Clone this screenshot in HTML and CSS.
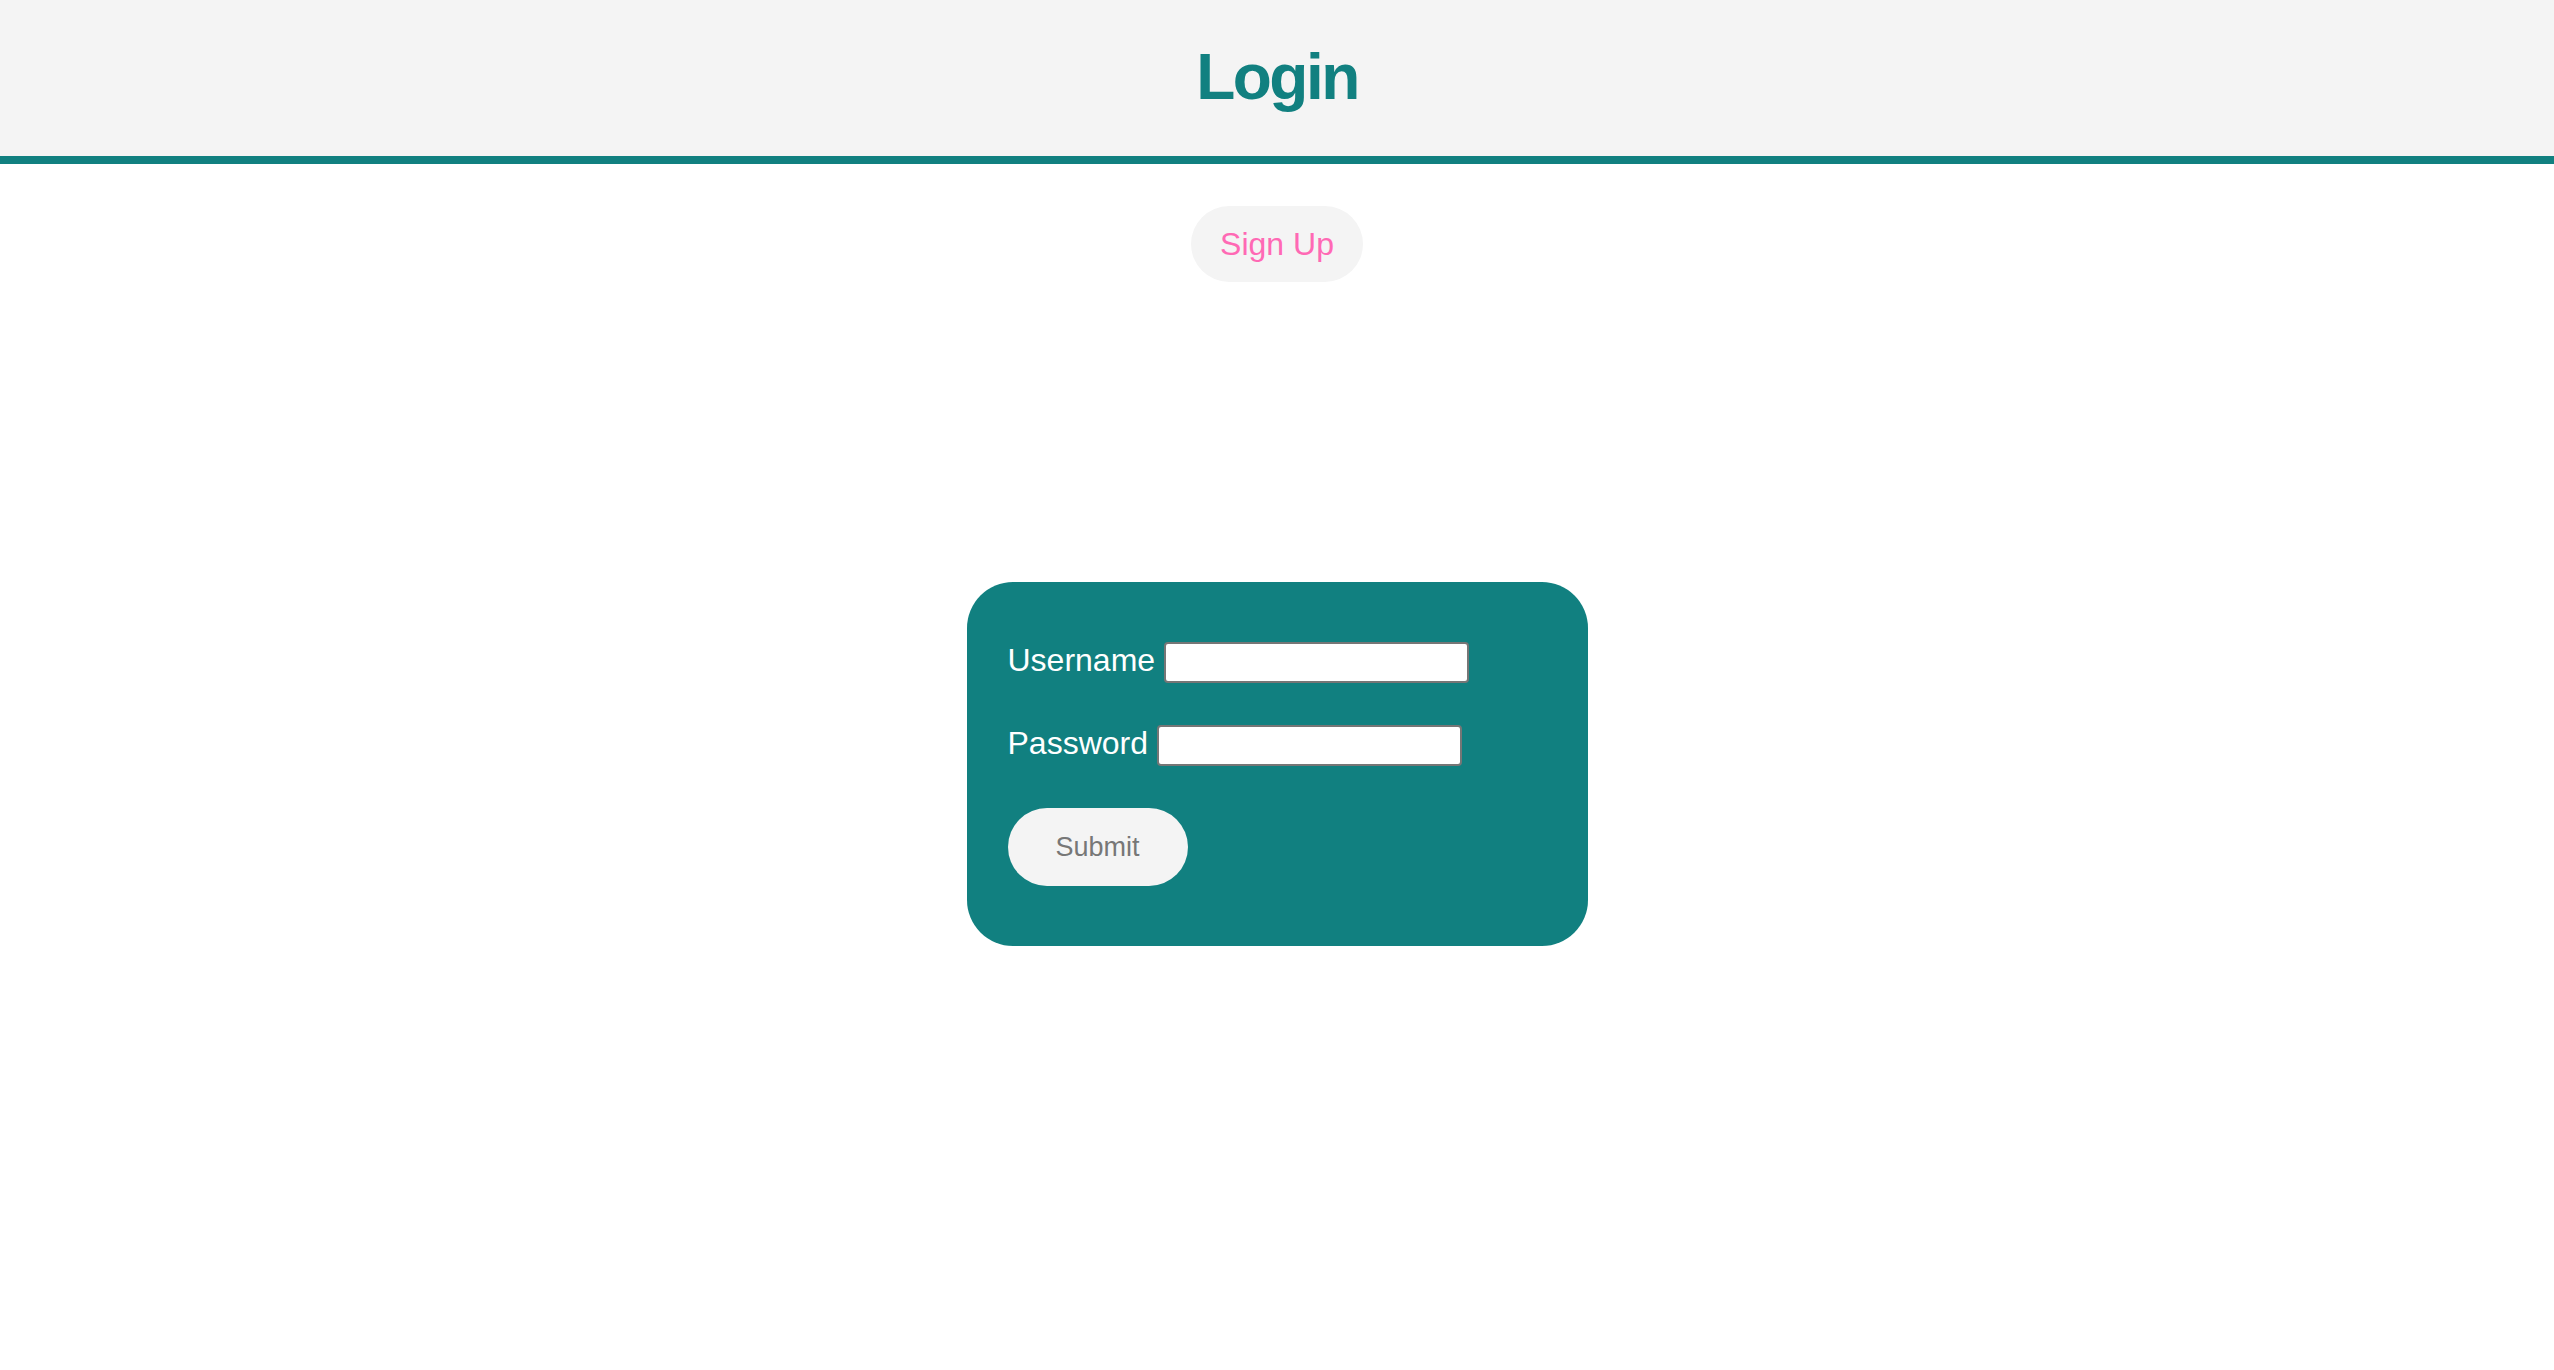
FILE: index.html
```html
<!DOCTYPE html>
<html lang="en">
<head>
<meta charset="utf-8">
<title>Login</title>
<link rel="stylesheet" href="styles.css">
</head>
<body>
<header class="site-header">
  <h1 class="title">Login</h1>
</header>
<nav class="nav">
  <a class="signup" href="#">Sign Up</a>
</nav>
<main class="main">
  <form class="card">
    <div class="row">
      <label class="label" for="u">Username</label>
      <input class="field" id="u" type="text">
    </div>
    <div class="row">
      <label class="label" for="p">Password</label>
      <input class="field" id="p" type="password">
    </div>
    <button class="submit" type="button">Submit</button>
  </form>
</main>
</body>
</html>
```
FILE: styles.css
```css
* { box-sizing: border-box; }
html, body { margin: 0; padding: 0; background: #ffffff; }
body { font-family: "Liberation Sans", Arial, Helvetica, sans-serif; }

.site-header {
  height: 164px;
  background: #f4f4f4;
  border-bottom: 8px solid #118080;
  display: flex;
  align-items: center;
  justify-content: center;
}
.title {
  margin: 0;
  font-size: 64px;
  font-weight: 700;
  color: #118080;
  letter-spacing: -2.5px;
  line-height: 74px;
  padding-bottom: 2px;
}

.nav {
  display: flex;
  justify-content: center;
  padding-top: 42px;
}
.signup {
  display: block;
  height: 76px;
  width: 172px;
  border-radius: 38px;
  background: #f4f4f4;
  color: #ff69b4;
  text-decoration: none;
  font-size: 32px;
  line-height: 76px;
  text-align: center;
}

.main {
  display: flex;
  justify-content: center;
  padding-top: 300px;
}
.card {
  width: 621px;
  height: 364px;
  background: #118080;
  border-radius: 46px;
  padding: 60px 40px 60px 41px;
  display: flex;
  flex-direction: column;
  align-items: flex-start;
}
.row {
  display: flex;
  align-items: center;
  height: 41px;
  margin-bottom: 42px;
}
.label {
  color: #ffffff;
  font-size: 32px;
  line-height: 37px;
  margin-right: 9px;
  padding-bottom: 4px;
}
.field {
  width: 305px;
  height: 41px;
  border: 2px solid #767676;
  border-radius: 4px;
  background: #ffffff;
  padding: 2px 4px;
  font-size: 26px;
  margin: 0;
}
.submit {
  width: 180px;
  height: 80px;
  border: none;
  border-radius: 40px;
  background: #f4f4f4;
  color: #777777;
  font-family: "Liberation Sans", Arial, Helvetica, sans-serif;
  font-size: 27px;
  padding: 0;
  margin: 0;
}
```
